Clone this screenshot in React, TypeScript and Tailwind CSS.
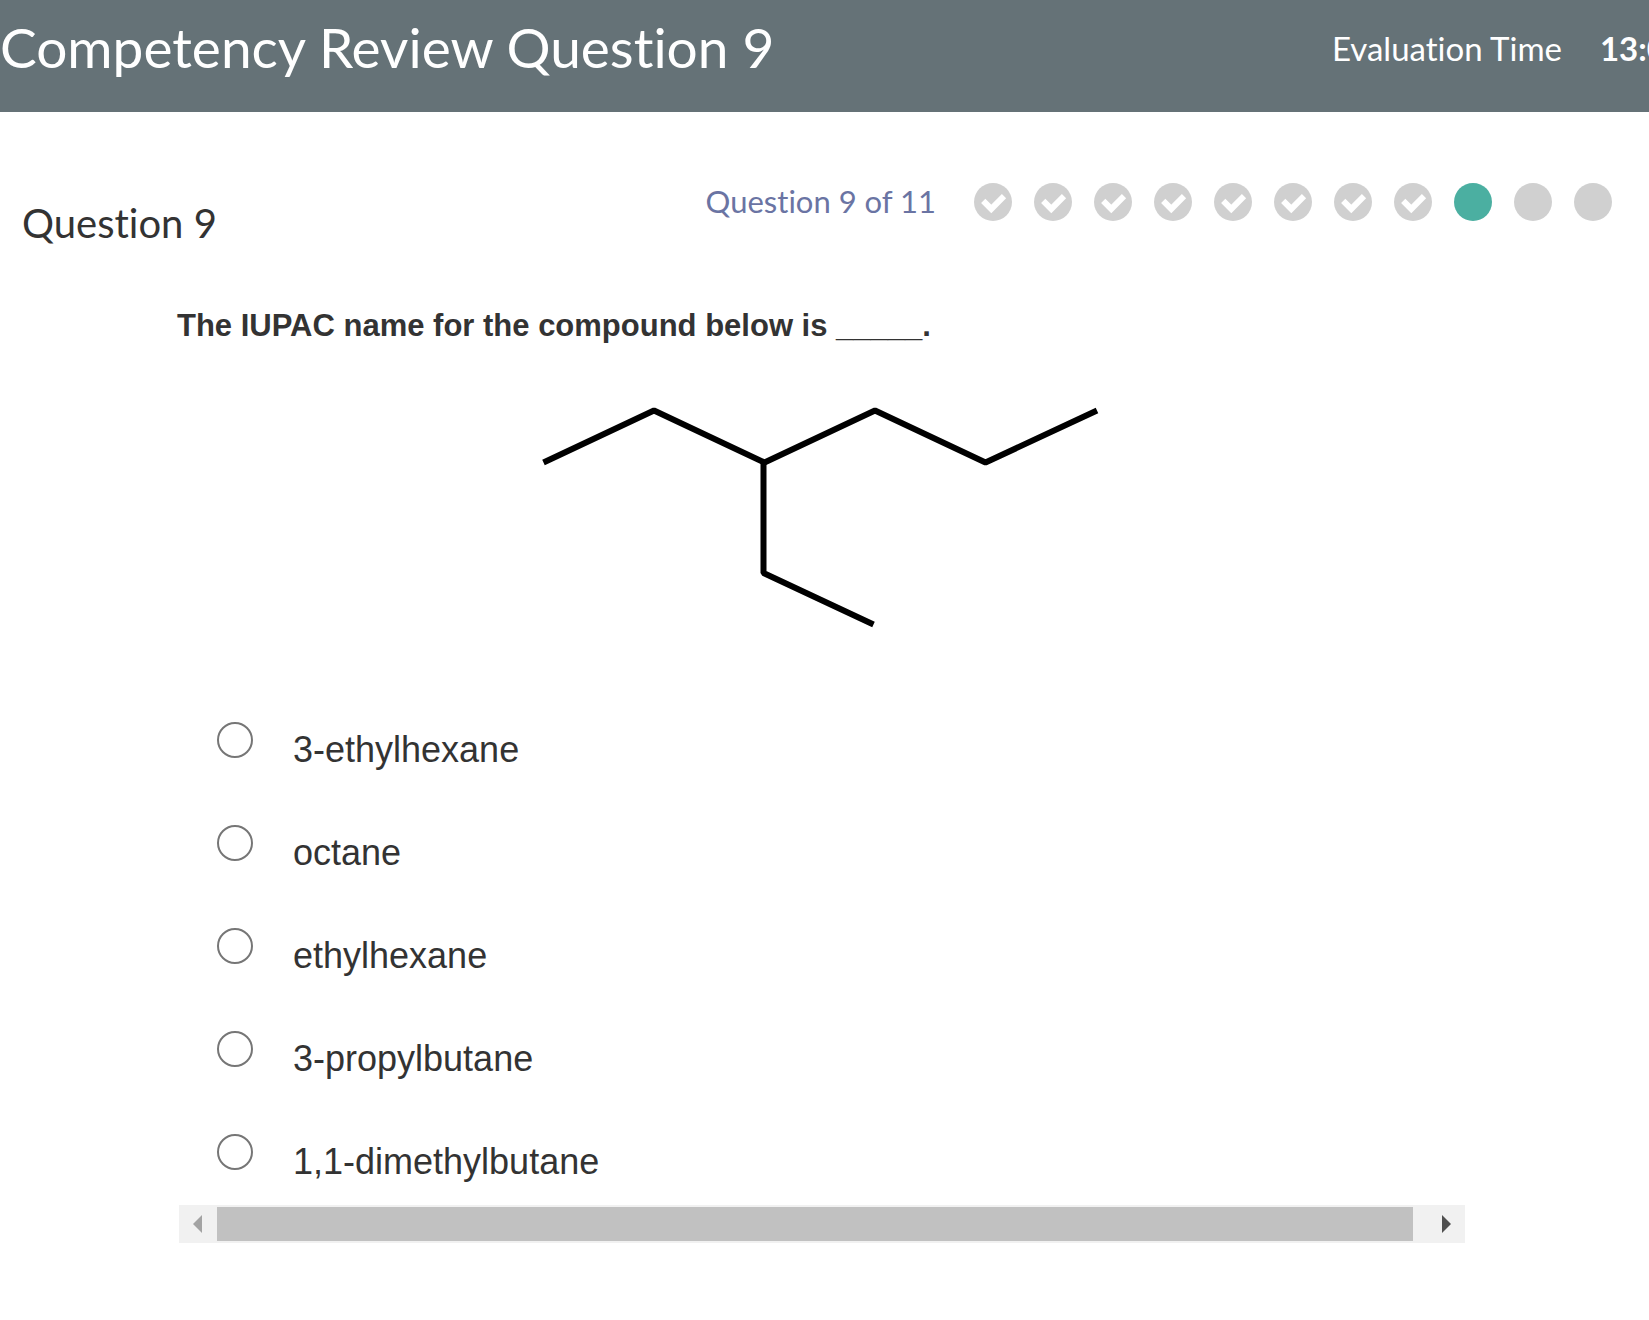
import { useState } from "react";

const TOTAL = 11;
const CURRENT = 9;

const choices = [
  "3-ethylhexane",
  "octane",
  "ethylhexane",
  "3-propylbutane",
  "1,1-dimethylbutane",
];

const Header = () => (
  <header className="flex h-28 items-start justify-between overflow-hidden bg-[#657277] text-white">
    <h1 className="pt-[14px] text-[55px] leading-[66px] whitespace-nowrap">
      Competency Review Question 9
    </h1>
    <div className="flex w-[317px] shrink-0 gap-[38px] pt-[27px] text-[33px] leading-[42px] whitespace-nowrap">
      <span>Evaluation Time</span>
      <span className="font-bold">13:0</span>
    </div>
  </header>
);

const Progress = () => (
  <div className="flex items-start gap-[38px]">
    <span className="-mt-[3px] text-[31px] leading-[42px] whitespace-nowrap text-[#6a74a3]">
      Question {CURRENT} of {TOTAL}
    </span>
    <ol className="flex gap-[22px]">
      {Array.from({ length: TOTAL }, (_, i) => {
        const n = i + 1;
        return (
          <li
            key={n}
            aria-label={`Question ${n}`}
            className={
              n === CURRENT
                ? "size-[38px] rounded-full bg-[#4bafa1]"
                : "size-[38px] rounded-full bg-[#d0d0d0]"
            }
          >
            {n < CURRENT && (
              <svg viewBox="0 0 38 38" className="size-full" fill="none">
                <path
                  d="M9.2 17.8L17.3 25.9L30 13.2"
                  stroke="#fff"
                  strokeWidth="6"
                  strokeLinejoin="miter"
                />
              </svg>
            )}
          </li>
        );
      })}
    </ol>
  </div>
);

// skeletal formula of the compound
const Molecule = () => (
  <svg
    viewBox="0 0 562 224"
    className="ml-[363px] h-[224px] w-[562px]"
    fill="none"
    stroke="#000"
    strokeWidth="6"
    role="img"
    aria-label="Skeletal formula"
  >
    <path d="M3.5 57.5L114 5.5L224.5 57.5L335 5.5L445.5 57.5L557 5.5" strokeLinejoin="bevel" />
    <path d="M223.5 56V168L333.5 219.5" strokeLinejoin="bevel" />
  </svg>
);

const ScrollBar = () => (
  <div className="flex h-[38px] items-center bg-[#f1f1f1]">
    <button type="button" aria-label="Scroll left" className="flex size-[38px] items-center pl-[14px]">
      <svg viewBox="0 0 9 18" className="h-[18px] w-[9px]" fill="#a3a3a3">
        <path d="M9 0V18L0 9Z" />
      </svg>
    </button>
    <div className="mr-[14px] h-[34px] flex-1 bg-[#c1c1c1]" />
    <button type="button" aria-label="Scroll right" className="flex size-[38px] items-center justify-end pr-[14px]">
      <svg viewBox="0 0 9 18" className="h-[18px] w-[9px]" fill="#505050">
        <path d="M0 0V18L9 9Z" />
      </svg>
    </button>
  </div>
);

const App = () => {
  const [answer, setAnswer] = useState("");

  return (
    <div className="min-h-screen overflow-hidden bg-white font-['Lato',sans-serif] text-[#333] [font-variant-ligatures:none]">
      <Header />

      <main>
        <div className="flex items-start justify-between pt-[71px] pr-[37px] pl-[22px]">
          <h2 className="pt-4 text-[40px] leading-[48px] whitespace-nowrap">Question {CURRENT}</h2>
          <Progress />
        </div>

        <div className="mr-[184px] ml-[177px] pt-[59px] font-['Liberation_Sans',Arial,sans-serif]">
          <p className="text-[31px] leading-10 font-bold whitespace-nowrap">
            The IUPAC name for the compound below is _____.
          </p>

          <div className="pt-[59px]">
            <Molecule />
          </div>

          <div role="radiogroup" aria-label="Answers" className="pt-[93px] pl-10">
            {choices.map((choice, i) => (
              <div key={choice} className="flex h-[103px] items-start gap-10">
                <input
                  type="radio"
                  id={`choice-${i}`}
                  name="answer"
                  value={choice}
                  checked={answer === choice}
                  onChange={() => setAnswer(choice)}
                  className="size-9 shrink-0 appearance-none rounded-full border-2 border-[#767676] bg-white checked:border-[10px] checked:border-[#0075ff]"
                />
                <label htmlFor={`choice-${i}`} className="pt-2 text-[36px] leading-10">
                  {choice}
                </label>
              </div>
            ))}
          </div>
        </div>

        <div className="-mt-8 mr-[184px] ml-[179px]">
          <ScrollBar />
        </div>
      </main>
    </div>
  );
};

export default App;
